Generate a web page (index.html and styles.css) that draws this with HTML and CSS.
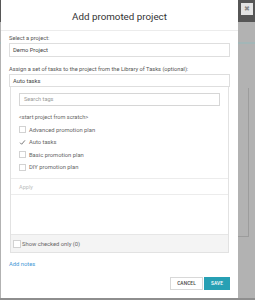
FILE: index.html
```html
<!DOCTYPE html>
<html>
<head>
<meta charset="utf-8">
<link rel="stylesheet" href="styles.css">
</head>
<body>
<div class="page">
  <div class="topbar"></div>
  <div class="content">
    <div class="rule"></div>
    <div class="panel-bg"></div>
  </div>
</div>
<button class="close" aria-label="Close">&#x2716;</button>
<div class="modal">
  <div class="modal-header">Add promoted project</div>
  <div class="modal-body">
    <div class="label">Select a project:</div>
    <div class="field">Demo Project</div>
    <div class="label label-2">Assign a set of tasks to the project from the Library of Tasks (optional):</div>
    <div class="field field-open">Auto tasks</div>
    <div class="dropdown">
      <div class="search-wrap"><div class="search">Search tags</div></div>
      <div class="scratch">&lt;start project from scratch&gt;</div>
      <div class="opt"><span class="cb"></span>Advanced promotion plan</div>
      <div class="opt"><span class="cb checked"><svg viewBox="0 0 8 8" width="7" height="7"><path d="M1.2 4.2 L3 6 L6.8 1.6" fill="none" stroke="#555" stroke-width="0.9"/></svg></span>Auto tasks</div>
      <div class="opt"><span class="cb"></span>Basic promotion plan</div>
      <div class="opt"><span class="cb"></span>DIY promotion plan</div>
      <div class="apply">Apply</div>
      <div class="empty"></div>
      <div class="dd-footer"><span class="cb cb-lg"></span>Show checked only (0)</div>
    </div>
    <a class="notes" href="#">Add notes</a>
    <div class="actions">
      <button class="btn btn-cancel">CANCEL</button>
      <button class="btn btn-save">SAVE</button>
    </div>
  </div>
</div>
</body>
</html>
```
FILE: styles.css
```css
html, body {
  margin: 0;
  padding: 0;
}
body {
  width: 255px;
  height: 300px;
  overflow: hidden;
  background: #b2b2b2;
  font-family: Roboto, "Liberation Sans", sans-serif;
  position: relative;
}
.page {
  height: 298px;
  border-bottom: 2px solid #8e8e8e;
}
.topbar {
  height: 22px;
  background: #565656;
}
.content {
  padding-top: 20px;
}
.rule {
  height: 2px;
  background: #a3b6b7;
}
.panel-bg {
  margin-top: 44px;
  margin-left: 200px;
  width: 48px;
  height: 148px;
  border-right: 1px solid #9c9c9c;
  border-bottom: 1px solid #9c9c9c;
}
.close {
  position: absolute;
  left: 241px;
  top: 3px;
  width: 12px;
  height: 12px;
  padding: 0;
  border: none;
  background: #e4e4e4;
  color: #8a8a8a;
  font-size: 7px;
  line-height: 12px;
  text-align: center;
  font-family: "DejaVu Sans", sans-serif;
}
.modal {
  position: absolute;
  left: 1px;
  top: 0;
  width: 237px;
  height: 298px;
  background: #fff;
  box-sizing: border-box;
}
.modal-header {
  height: 31px;
  border-bottom: 1px solid #ececec;
  box-sizing: border-box;
  text-align: center;
  font-size: 9.8px;
  line-height: 34px;
  color: #333;
}
.modal-body {
  padding: 0 8px;
}
.label {
  font-size: 5.7px;
  color: #555;
  line-height: 8px;
  margin-top: 3px;
  height: 8px;
}
.label-2 {
  margin-top: 8px;
}
.field {
  margin-top: 1px;
  height: 14px;
  border: 1px solid #dedede;
  box-sizing: border-box;
  padding-left: 3px;
  font-size: 5.8px;
  line-height: 12px;
  color: #444;
}
.field-open {
  height: 13px;
}
.dropdown {
  margin: 0 1px;
  height: 166px;
  border: 1px solid #e2e2e2;
  border-top: none;
  box-sizing: border-box;
  display: flex;
  flex-direction: column;
}
.search-wrap {
  padding: 6px 8px 0 8px;
}
.search {
  height: 13px;
  border: 1px solid #d6d6d6;
  box-sizing: border-box;
  padding-left: 4px;
  font-size: 5.6px;
  line-height: 11px;
  color: #999;
}
.scratch {
  margin-top: 7px;
  padding-left: 8px;
  font-size: 5.6px;
  line-height: 8px;
  color: #666;
}
.opt {
  display: flex;
  align-items: center;
  gap: 3px;
  padding-left: 8px;
  margin-top: 4.6px;
  height: 8px;
  font-size: 5.8px;
  color: #666;
}
.cb {
  width: 7px;
  height: 7px;
  border: 1px solid #d2d2d2;
  box-sizing: border-box;
  display: inline-flex;
  align-items: center;
  justify-content: center;
  flex: none;
}
.cb.checked {
  border: none;
}
.cb.checked svg {
  display: block;
}
.apply {
  margin-top: 7px;
  height: 17px;
  border-top: 1px solid #ececec;
  border-bottom: 1px solid #ececec;
  box-sizing: border-box;
  padding-left: 8px;
  font-size: 5.6px;
  line-height: 16px;
  color: #bdbdbd;
}
.empty {
  flex: 1;
}
.dd-footer {
  height: 18px;
  border-top: 1px solid #e6e6e6;
  background: #f4f4f4;
  box-sizing: border-box;
  display: flex;
  align-items: center;
  gap: 1px;
  padding-left: 2px;
  font-size: 5.8px;
  color: #666;
}
.cb-lg {
  width: 8px;
  height: 8px;
  background: #fff;
}
.notes {
  display: block;
  margin-top: 7px;
  font-size: 5.8px;
  line-height: 8px;
  color: #3f98d6;
  text-decoration: none;
}
.actions {
  margin-top: 9px;
  display: flex;
  justify-content: flex-end;
  gap: 1px;
}
.btn {
  height: 13px;
  padding: 0;
  font-family: Roboto, "Liberation Sans", sans-serif;
  font-size: 4.8px;
  font-weight: 500;
  letter-spacing: 0.1px;
  box-sizing: border-box;
}
.btn-cancel {
  width: 33px;
  background: #fff;
  border: 1px solid #d8d8d8;
  color: #444;
}
.btn-save {
  width: 26px;
  background: #27a0b4;
  border: none;
  color: #fff;
}
```
